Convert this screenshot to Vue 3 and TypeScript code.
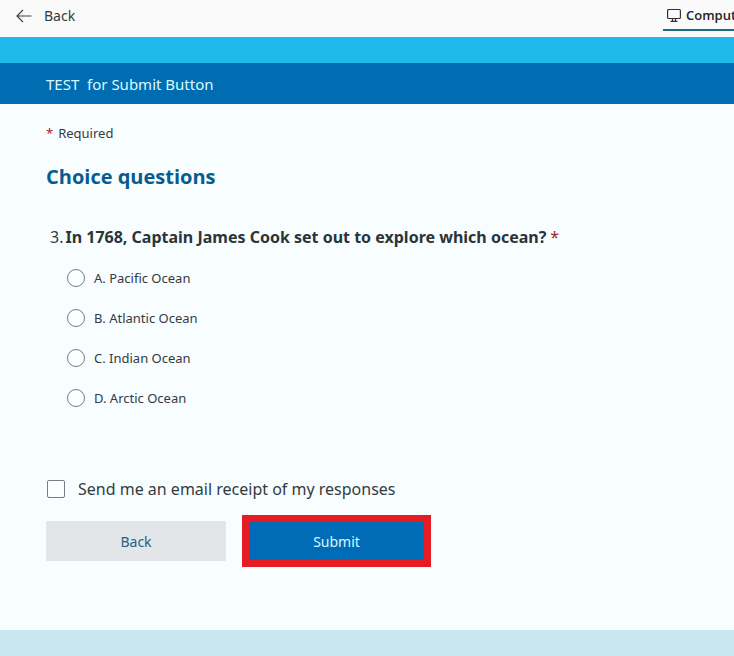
<script setup lang="ts">
import { ref } from 'vue'

interface Option {
  id: string
  label: string
}

const options: Option[] = [
  { id: 'a', label: 'A. Pacific Ocean' },
  { id: 'b', label: 'B. Atlantic Ocean' },
  { id: 'c', label: 'C. Indian Ocean' },
  { id: 'd', label: 'D. Arctic Ocean' },
]

const answer = ref<string>('')
const emailReceipt = ref<boolean>(false)
</script>

<template>
  <div class="page">
    <header class="toolbar">
      <button type="button" class="nav-back">
        <svg class="arrow" viewBox="0 0 16 14" aria-hidden="true">
          <path d="M7 1 1 7l6 6M1 7h14.5" />
        </svg>
        <span>Back</span>
      </button>
      <button type="button" class="device">
        <svg class="monitor" viewBox="0 0 14 14" aria-hidden="true">
          <rect x="0.6" y="1.5" width="12.8" height="9" rx="1" />
          <path d="M5.500 10.500v2.500M8.500 10.500v2.500M3.500 13.300h7" />
        </svg>
        <span>Computer</span>
      </button>
    </header>

    <div class="banner"></div>
    <div class="title-bar"><h1>TEST&nbsp; for Submit Button</h1></div>

    <form class="form" @submit.prevent>
      <p class="required"><span class="star">*</span><span>Required</span></p>
      <h2>Choice questions</h2>

      <fieldset class="question">
        <legend>
          <span class="number">3.</span>
          <span class="prompt">In 1768, Captain James Cook set out to explore which ocean?</span>
          <span class="star">*</span>
        </legend>
        <label v-for="option in options" :key="option.id" class="option">
          <input v-model="answer" type="radio" name="ocean" :value="option.id" />
          <span>{{ option.label }}</span>
        </label>
      </fieldset>

      <label class="receipt">
        <input v-model="emailReceipt" type="checkbox" />
        <span>Send me an email receipt of my responses</span>
      </label>

      <div class="actions">
        <button type="button" class="action back">Back</button>
        <div class="highlight">
          <button type="submit" class="action submit">Submit</button>
        </div>
      </div>
    </form>
  </div>
</template>

<style>
body {
  margin: 0;
  background: #c9e7f1;
}
</style>

<style scoped>
.page {
  box-sizing: border-box;
  display: flex;
  flex-direction: column;
  min-height: 100vh;
  padding-bottom: 26px;
  overflow-x: hidden;
  color: #333b3f;
  background: #c9e7f1;
  font-family: 'Noto Sans', 'Open Sans', sans-serif;
  font-size: 14px;
}

button {
  padding: 0;
  border: 0;
  border-radius: 0;
  background: none;
  color: inherit;
  font: inherit;
  cursor: pointer;
}

.toolbar {
  display: flex;
  justify-content: space-between;
  height: 37px;
  background: #fafafa;
}

.nav-back {
  display: flex;
  align-items: center;
  gap: 12px;
  height: 31px;
  margin-left: 16px;
}

.arrow {
  width: 16px;
  height: 14px;
  fill: none;
  stroke: #424242;
  stroke-width: 1.2;
}

.device {
  display: flex;
  flex: none;
  align-items: center;
  box-sizing: border-box;
  gap: 5px;
  width: 92px;
  height: 31px;
  margin-right: -21px;
  padding-left: 4px;
  border-bottom: 2px solid #1c6e7d;
  color: #242424;
  font-family: 'Open Sans', 'Noto Sans', sans-serif;
  font-size: 13px;
  font-weight: 600;
}

.monitor {
  flex: none;
  width: 14px;
  height: 14px;
  fill: none;
  stroke: #333333;
  stroke-width: 1.2;
}

.banner {
  height: 26px;
  background: #1fb9ec;
}

.title-bar {
  display: flex;
  align-items: center;
  height: 41px;
  padding: 0 46px;
  background: #006cb2;
  color: #d9faff;
}

h1 {
  margin: 0;
  font-size: 15px;
  font-weight: 400;
}

.form {
  flex: 1;
  padding: 19px 46px 63px;
  background: #f8fdff;
}

.required {
  display: flex;
  gap: 5px;
  margin: 0;
  font-size: 13px;
  line-height: 20px;
}

.star {
  color: #a4262c;
  font-weight: 400;
}

h2 {
  margin: 20px 0 0;
  color: #075c8f;
  font-family: 'Open Sans', 'Noto Sans', sans-serif;
  font-size: 20px;
  font-weight: 700;
  line-height: 28px;
}

.question {
  min-width: 0;
  margin: 31px 0 0;
  padding: 0 0 0 4px;
  border: 0;
}

legend {
  display: flex;
  gap: 2px;
  padding: 0;
  font-size: 16px;
  line-height: 30px;
}

.prompt {
  margin-right: 2px;
  color: #2b3437;
  font-weight: 700;
}

.option {
  display: flex;
  align-items: center;
  gap: 9px;
  height: 40px;
  margin-left: 17px;
  font-size: 13px;
}

.option:first-of-type {
  margin-top: 6px;
}

input {
  flex: none;
  box-sizing: border-box;
  width: 18px;
  height: 18px;
  margin: 0;
  border: 1px solid #777d80;
  background: #fbffff;
  appearance: none;
}

input[type='radio'] {
  border-radius: 50%;
}

input[type='radio']:checked {
  border: 5px solid #006cb2;
}

input[type='checkbox'] {
  border-radius: 2px;
}

input[type='checkbox']:checked {
  background: #006cb2;
}

.receipt {
  display: flex;
  align-items: center;
  gap: 13px;
  height: 24px;
  margin-top: 59px;
  padding-left: 1px;
  font-size: 16px;
}

.actions {
  display: flex;
  align-items: center;
  gap: 16px;
  margin-top: 14px;
}

.action {
  width: 180px;
  height: 40px;
}

.back {
  background: #e2e6e8;
  color: #265f88;
}

.highlight {
  display: flex;
  border: 7px solid #e51c23;
}

.submit {
  width: 175px;
  height: 38px;
  background: #006cb8;
  color: #d9faff;
}
</style>
